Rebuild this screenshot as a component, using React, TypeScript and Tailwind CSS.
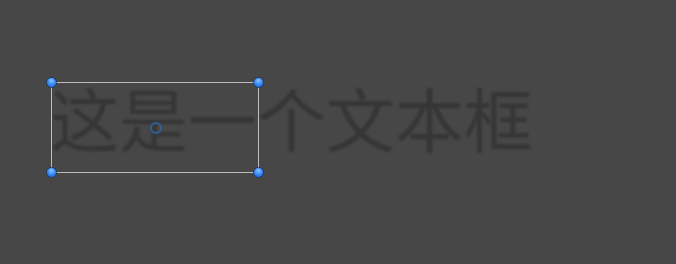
import React from "react";

function Handle({ cls }: { cls: string }) {
  return (
    <div
      className={`absolute w-[11px] h-[11px] rounded-full border border-[#1a3a6a] bg-[radial-gradient(circle_at_50%_30%,#8cc4ff_0%,#3f8ff5_45%,#1560d8_100%)] ${cls}`}
    />
  );
}

export default function App() {
  return (
    <div className="relative w-[676px] h-[264px] bg-[#474747] overflow-hidden">
      <div className="pl-[50px] pt-[83px]">
        <div
          className="text-[69px] leading-[1] text-[#363636] blur-[1px] whitespace-nowrap"
          style={{ fontFamily: '"Noto Sans CJK SC", sans-serif' }}
        >
          这是一个文本框
        </div>
      </div>
      <div className="absolute left-[51px] top-[82px] w-[208px] h-[91px] border border-[#bdbdbd]">
        <Handle cls="-left-[6px] -top-[6px]" />
        <Handle cls="-right-[6px] -top-[6px]" />
        <Handle cls="-left-[6px] -bottom-[6px]" />
        <Handle cls="-right-[6px] -bottom-[6px]" />
        <div className="absolute left-[98px] top-[39px] w-[12px] h-[12px] rounded-full border-2 border-[#2f5f99]" />
      </div>
    </div>
  );
}
